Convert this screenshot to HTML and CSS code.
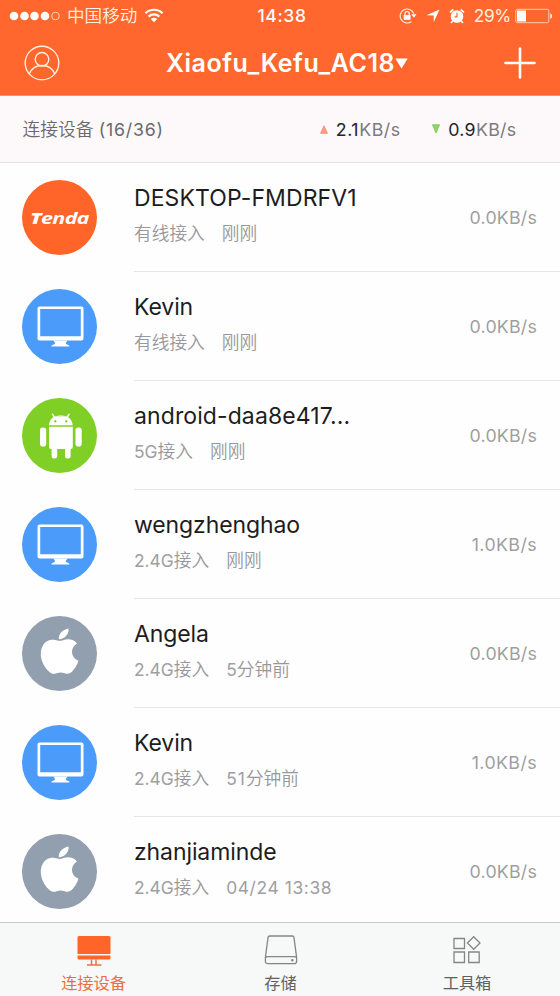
FILE: index.html
```html
<!DOCTYPE html>
<html lang="zh-CN">
<head>
<meta charset="utf-8">
<title>连接设备</title>
<link rel="stylesheet" href="styles.css">
</head>
<body>
<svg class="defs" aria-hidden="true">
  <symbol id="monitor" viewBox="0 0 75 75">
    <path fill="#fff" fill-rule="evenodd" d="M17.500 17.400h42a2 2 0 0 1 2 2v29.800a2.200 2.200 0 0 1-2 2.300h-42a2.200 2.200 0 0 1-2-2.300v-29.800a2 2 0 0 1 2-2zM18.200 20v27.200h40.600V20z"/>
    <path fill="#fff" d="M31.400 51.400h14.200l-1.800 2.300c-.5 1.300 1.500 1.800 3 2.500.8.400.8 1.300 0 1.300H30c-.8 0-.8-.9 0-1.300 1.500-.7 3.400-1.200 3-2.500z"/>
  </symbol>
  <symbol id="android" viewBox="0 0 75 75">
    <g fill="#fff">
      <path fill-rule="evenodd" d="M26.900 27.300c.4-4.800 3-7.400 5.800-8.800h12.200c2.800 1.400 5.400 4 5.800 8.800zM33.300 22a1.200 1.200 0 1 0 .1 0zM44.200 22a1.200 1.200 0 1 0 .1 0z"/>
      <path d="M27 28.800h23.800v20.300a2 2 0 0 1-2 2H29a2 2 0 0 1-2-2zM32.600 18.600q6.200-2 12.400 0z"/>
      <rect x="18" y="29.500" width="6.200" height="19" rx="2.800"/>
      <rect x="53.500" y="29.500" width="6.200" height="19" rx="2.800"/>
      <rect x="29.600" y="44" width="5.600" height="16.500" rx="2.500"/>
      <rect x="43" y="44" width="5.600" height="16.500" rx="2.500"/>
    </g>
    <path d="M30.600 16.300l2.800 4.200M47 16.300l-2.800 4.200" stroke="#fff" stroke-width="1.500" stroke-linecap="round"/>
  </symbol>
  <symbol id="apple" viewBox="0 0 75 75">
    <path fill="#fff" d="M36.800 23.300c-.5-5.500 3.800-9.800 9.800-10.900.5 5.300-3.700 10.700-9.800 10.900zM54.900 27.500C51.700 29.600 50 32.500 50 35.800c0 4.300 2.600 7.400 6.500 9-1.500 4.300-3.900 8.400-6.600 11-2 2-4.400 2.500-7.200 1.400-2.800-1.100-5-1.100-7.900 0-2.900 1.100-5.200.9-7.300-1.100C19.400 49 16.300 37.200 20.900 29.500c2.500-4.200 7.400-6.500 11.900-5.400 3.600.9 5 1.400 8.800 0 5-1.700 10.400-.4 13.300 3.400z"/>
  </symbol>
</svg>
<div class="app">
  <header class="header">
    <div class="status">
      <div class="status-left">
        <svg width="52" height="12" viewBox="0 0 52 12"><g fill="#fff"><circle cx="5" cy="6" r="4.300"/><circle cx="15.500" cy="6" r="4.300"/><circle cx="25.500" cy="6" r="4.300"/><circle cx="36" cy="6" r="4.300"/></g><circle cx="46.500" cy="6" r="3.800" fill="none" stroke="#ffd9b8" stroke-width="1"/></svg>
        <span class="carrier">中国移动</span>
        <svg class="wifi" width="20" height="15" viewBox="0 0 20 15"><path d="M1.500 5.200a12.200 12.200 0 0 1 17 0M4.700 8.600a7.600 7.600 0 0 1 10.600 0" fill="none" stroke="#fff" stroke-width="2.200"/><path d="M6.800 11a4.600 4.600 0 0 1 6.400 0L10 14.300z" fill="#fff"/></svg>
      </div>
      <span class="clock">14:38</span>
      <div class="status-right">
        <svg width="18" height="16" viewBox="0 0 18 16"><path d="M14.800 5.800A7 7 0 1 0 12.500 13.500" fill="none" stroke="#ffe6d8" stroke-width="1.200"/><path d="M12.300 6.300h5.200l-2.600 3.400z" fill="#fff"/><rect x="4.700" y="7" width="6.800" height="4.800" fill="#fff"/><path d="M6 7V5.600a2.100 2.100 0 0 1 4.200 0V7" fill="none" stroke="#fff" stroke-width="1.100"/></svg>
        <svg class="locate" width="14" height="14" viewBox="0 0 14 14"><path d="M13.500.5L7.700 13.300V6.500L.5 6.300z" fill="#fff"/></svg>
        <svg class="alarm" width="16" height="16" viewBox="0 0 16 16"><circle cx="8" cy="8.500" r="6.300" fill="#fff"/><path d="M1 4.300L4.300 1.500M15 4.300l-3.300-2.800M3.600 13L2 15M12.400 13l1.600 2" stroke="#fff" stroke-width="1.700"/><path d="M8 4.700v4.100H5.500" fill="none" stroke="#ff672e" stroke-width="1.200"/></svg>
        <span class="percent">29%</span>
        <svg width="38" height="16" viewBox="0 0 38 16"><rect x=".8" y="1.300" width="33" height="13.400" rx="1.500" fill="none" stroke="#ffd0a8"/><rect x="2" y="2.500" width="9" height="11" fill="#fff"/><path d="M35.300 5.200c2.200.7 2.200 4.900 0 5.600z" fill="#fff"/></svg>
      </div>
    </div>
    <div class="nav">
      <svg width="36" height="36" viewBox="0 0 36 36" fill="none" stroke="#fff0df" stroke-width="1.400"><circle cx="18" cy="18" r="16.800"/><circle cx="18" cy="14.300" r="6.800"/><path d="M5.300 29c2-5.300 6.800-8.500 12.700-8.500S28.700 23.700 30.700 29"/></svg>
      <div class="title"><span>Xiaofu_Kefu_AC18</span><svg width="13" height="11" viewBox="0 0 13 11"><path d="M.3.500h12.400L6.500 10.500z" fill="#fff"/></svg></div>
      <svg width="32" height="32" viewBox="0 0 32 32"><path d="M16 1.500v29M1.500 16h29" stroke="#fff" stroke-width="2.600" stroke-linecap="round"/></svg>
    </div>
  </header>
  <section class="summary">
    <div class="count"><span>连接设备</span><span class="total">(16/36)</span></div>
    <div class="rates">
      <svg width="8" height="9" viewBox="0 0 8 9"><path d="M4 .8L7.400 8.300H.6z" fill="#ff9d80" stroke="#f08870" stroke-width=".8"/></svg>
      <span class="rate up"><b>2.1</b>KB/s</span>
      <svg width="8" height="10" viewBox="0 0 8 10"><path d="M.5.800h7L4 9z" fill="#92d66a" stroke="#73c443" stroke-width=".8"/></svg>
      <span class="rate down"><b>0.9</b>KB/s</span>
    </div>
  </section>
  <main class="list">
    <article class="device"><div class="avatar tenda"><span>Tenda</span></div><div class="body"><div class="info"><h2 class="loose">DESKTOP-FMDRFV1</h2><p><span>有线接入</span><span>刚刚</span></p></div><span class="speed">0.0KB/s</span></div></article>
    <article class="device"><div class="avatar blue"><svg><use href="#monitor"/></svg></div><div class="body"><div class="info"><h2>Kevin</h2><p><span>有线接入</span><span>刚刚</span></p></div><span class="speed">0.0KB/s</span></div></article>
    <article class="device"><div class="avatar green"><svg><use href="#android"/></svg></div><div class="body"><div class="info"><h2 class="loose">android-daa8e417...</h2><p><span><b>5G</b>接入</span><span>刚刚</span></p></div><span class="speed">0.0KB/s</span></div></article>
    <article class="device"><div class="avatar blue"><svg><use href="#monitor"/></svg></div><div class="body"><div class="info"><h2>wengzhenghao</h2><p><span><b>2.4G</b>接入</span><span>刚刚</span></p></div><span class="speed one">1.0KB/s</span></div></article>
    <article class="device"><div class="avatar gray"><svg><use href="#apple"/></svg></div><div class="body"><div class="info"><h2>Angela</h2><p><span><b>2.4G</b>接入</span><span><b>5</b>分钟前</span></p></div><span class="speed">0.0KB/s</span></div></article>
    <article class="device"><div class="avatar blue"><svg><use href="#monitor"/></svg></div><div class="body"><div class="info"><h2>Kevin</h2><p><span><b>2.4G</b>接入</span><span><b class="minutes">51</b>分钟前</span></p></div><span class="speed one">1.0KB/s</span></div></article>
    <article class="device"><div class="avatar gray"><svg><use href="#apple"/></svg></div><div class="body"><div class="info"><h2>zhanjiaminde</h2><p><span><b>2.4G</b>接入</span><b class="date">04/24 13:38</b></p></div><span class="speed">0.0KB/s</span></div></article>
  </main>
  <nav class="tabs">
    <div class="tab active"><svg width="36" height="34" viewBox="0 0 36 34"><path d="M3 2h30a1.500 1.500 0 0 1 1.500 1.500V20h-33V3.500A1.500 1.500 0 0 1 3 2zM1.500 21.500h33V24a1.500 1.500 0 0 1-1.500 1.500H3A1.500 1.500 0 0 1 1.500 24z" fill="#ff6529"/><path d="M15.500 25.500v5M20 25.500v5M11 31h14.500" stroke="#ee7043" stroke-width="1.500"/></svg><span>连接设备</span></div>
    <div class="tab"><svg width="36" height="34" viewBox="0 0 36 34" fill="none" stroke="#858585" stroke-width="1.300"><path d="M6.500 2h23c.8 0 1.300.5 1.400 1.200l2.700 20v4c0 1.600-1 2.500-2.500 2.500H4.900c-1.500 0-2.500-.9-2.500-2.500v-4l2.700-20C5.200 2.500 5.700 2 6.500 2zM2.600 23.500c.5-.5 1.300-.8 2.300-.8h26.200c1 0 1.800.3 2.300.8"/><circle cx="29.300" cy="26.300" r=".6"/></svg><span>存储</span></div>
    <div class="tab"><svg width="36" height="34" viewBox="0 0 36 34" fill="none" stroke="#858585" stroke-width="1.300"><path d="M5 4.500h10.500v10H5zM5 18h10.500v10.500H5zM19.700 18h10.500v10.500H19.700zM24.700 2.700l6.300 6.300-6.300 6.300L18.400 9z"/></svg><span>工具箱</span></div>
  </nav>
</div>
</body>
</html>
```

FILE: styles.css
```css
* { box-sizing: border-box; margin: 0; padding: 0; }
body { width: 560px; height: 996px; overflow: hidden; background: #fefefe; font-family: Inter, "Noto Sans CJK SC", sans-serif; color: #1d1d20; }
svg { display: block; flex: none; }
.defs { position: absolute; width: 0; height: 0; }
.app { display: flex; flex-direction: column; height: 996px; }
.header { height: 96px; background: #ff672e; border-bottom: 1px solid #f58f68; color: #fff; }
.status { display: grid; grid-template-columns: 1fr auto 1fr; align-items: center; height: 31px; padding: 0 7px 0 9px; }
.status-left, .status-right { display: flex; align-items: center; }
.status-right { justify-content: flex-end; }
.carrier { font-size: 17.600px; line-height: 24px; margin-left: 6px; color: #fff0df; font-weight: 350; }
.wifi { margin-left: 7px; }
.clock { font-size: 17.500px; font-weight: 500; letter-spacing: .6px; margin-left: 2px; }
.locate { margin-left: 9px; }
.alarm { margin-left: 9px; }
.percent { font-size: 17.300px; letter-spacing: -.3px; margin: 0 4px 0 9px; font-weight: 400; color: #fff0df; }
.nav { display: flex; align-items: center; justify-content: space-between; height: 64px; padding: 0 24px; }
.title { display: flex; align-items: center; gap: 0; margin-left: 10px; font-size: 25px; font-weight: 600; letter-spacing: .55px; }
.summary { display: flex; align-items: center; justify-content: space-between; height: 67px; padding: 0 43.500px 0 22.500px; background: #fdf9fa; border-bottom: 1px solid #e5e2e6; }
.count { display: flex; gap: 5px; padding-top: 2px; font-size: 17.800px; line-height: 26px; color: #6b696c; font-weight: 350; }
.total { letter-spacing: .8px; font-weight: 400; }
.rates { display: flex; align-items: center; }
.rate { font-size: 17.800px; letter-spacing: .3px; color: #7c7a7d; }
.rate b { font-weight: 400; color: #252327; }
.rate.up { margin: 0 31.500px 0 8px; letter-spacing: .55px; }
.down { margin-left: 8px; }
.list { flex: 1; overflow: hidden; }
.device { display: flex; height: 109px; padding-left: 22px; }
.avatar { flex: none; width: 75px; height: 75px; margin: 17px 37px 0 0; border-radius: 50%; display: flex; align-items: center; justify-content: center; }
.avatar svg { width: 75px; height: 75px; }
.tenda { background: #ff6529; }
.tenda span { color: #fff; font-size: 16.500px; line-height: 20px; font-weight: 700; font-style: italic; letter-spacing: -.5px; font-family: "Open Sans", sans-serif; transform: scaleX(1.3); }
.tenda span::first-letter { font-size: 16px; font-weight: 800; }
.blue { background: #4b9bfa; }
.green { background: #80cf26; }
.gray { background: #929faf; }
.body { flex: 1; display: flex; justify-content: space-between; align-items: center; border-bottom: 1px solid #e6e5e8; padding-right: 23px; }
.device:last-child .body { border-bottom: 0; }
.info { align-self: flex-start; padding-top: 20px; }
h2 { font-size: 23px; line-height: 30px; letter-spacing: -.1px; font-weight: 400; white-space: nowrap; }
.loose { letter-spacing: .1px; }
.info p { display: flex; gap: 17px; margin-top: 8px; font-size: 17.700px; line-height: 26px; color: #98979b; font-weight: 350; }
.info b { font-weight: 400; font-size: 17.400px; color: #9f9ea2; }
.info .date { letter-spacing: .6px; }
.minutes { letter-spacing: 1px; }
.speed { font-size: 17.800px; letter-spacing: .2px; color: #9f9ea2; }
.one { letter-spacing: .4px; }
.tabs { display: grid; grid-template-columns: 187px 187px 186px; height: 74px; background: #f7f8f8; border-top: 1px solid #c9c9ca; }
.tab { display: flex; flex-direction: column; align-items: center; padding-top: 11px; font-size: 16.200px; line-height: 24px; color: #606060; }
.tab span { margin-top: 3px; }
.active { color: #ec6d42; }
```
